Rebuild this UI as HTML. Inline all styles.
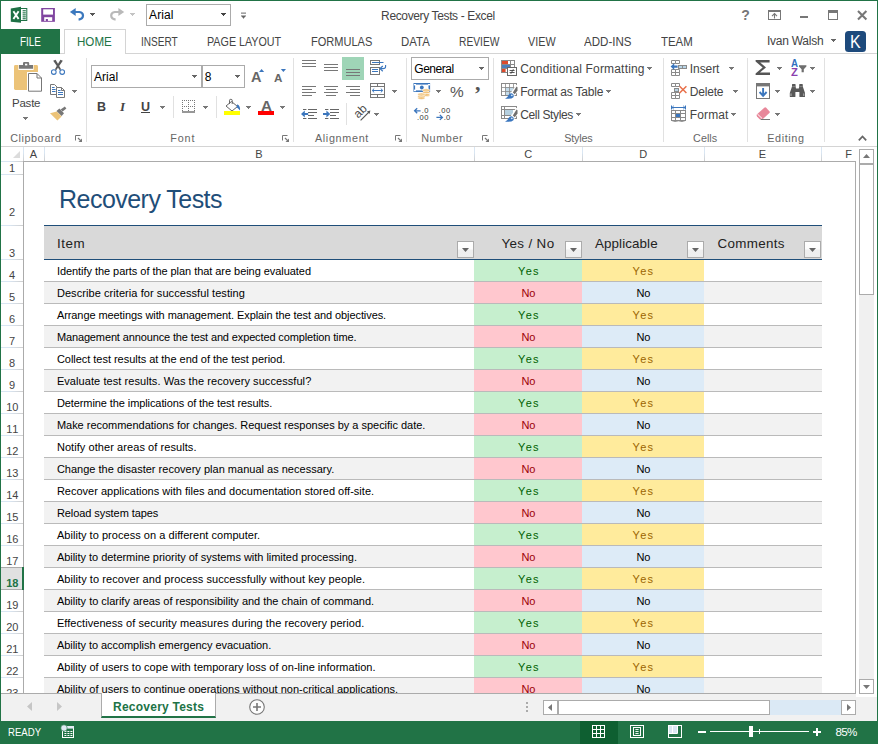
<!DOCTYPE html>
<html lang="en">
<head>
<meta charset="utf-8">
<title>Recovery Tests - Excel</title>
<style>

html,body{margin:0;padding:0;background:#fff;}
body{width:878px;height:744px;overflow:hidden;font-family:"Liberation Sans",Arial,sans-serif;}
#win{position:relative;width:878px;height:744px;overflow:hidden;background:#fff;}
#win div,#win span,#win svg{position:absolute;}
#win div{box-sizing:border-box;}
.t{white-space:pre;display:block;}
svg{overflow:visible;}

</style>
</head>
<body>
<div id="win">
<div style="left:1px;top:147px;width:855px;height:14px;background:#fff;"></div>
<div style="left:23px;top:161px;width:833px;height:1px;background:#ababab;"></div>
<div style="left:1px;top:161px;width:22px;height:1px;background:linear-gradient(90deg,#d9e6f3 0,#d9e6f3 35%,#cfcfcf 100%);"></div>
<div style="left:23px;top:147px;width:1px;height:14px;background:linear-gradient(180deg,#d9e6f3 0,#d9e6f3 40%,#cfcfcf 100%);"></div>
<div style="left:44px;top:147px;width:1px;height:14px;background:linear-gradient(180deg,#d9e6f3 0,#d9e6f3 40%,#cfcfcf 100%);"></div>
<div style="left:474px;top:147px;width:1px;height:14px;background:linear-gradient(180deg,#d9e6f3 0,#d9e6f3 40%,#cfcfcf 100%);"></div>
<div style="left:582px;top:147px;width:1px;height:14px;background:linear-gradient(180deg,#d9e6f3 0,#d9e6f3 40%,#cfcfcf 100%);"></div>
<div style="left:704px;top:147px;width:1px;height:14px;background:linear-gradient(180deg,#d9e6f3 0,#d9e6f3 40%,#cfcfcf 100%);"></div>
<div style="left:821px;top:147px;width:1px;height:14px;background:linear-gradient(180deg,#d9e6f3 0,#d9e6f3 40%,#cfcfcf 100%);"></div>
<span class="t" style="left:29.8px;top:149px;font-size:11px;line-height:11px;color:#444;">A</span>
<span class="t" style="left:255.3px;top:149px;font-size:11px;line-height:11px;color:#444;">B</span>
<span class="t" style="left:524.3px;top:149px;font-size:11px;line-height:11px;color:#444;">C</span>
<span class="t" style="left:639.3px;top:149px;font-size:11px;line-height:11px;color:#444;">D</span>
<span class="t" style="left:758.8px;top:149px;font-size:11px;line-height:11px;color:#444;">E</span>
<span class="t" style="left:845.3px;top:149px;font-size:11px;line-height:11px;color:#444;">F</span>
<svg style="left:13px;top:151px" width="7" height="7" viewBox="0 0 7 7"><path d="M7 0V7H0Z" fill="#dcdcdc"/></svg>
<div style="left:23px;top:162px;width:1px;height:532px;background:#ababab;"></div>
<div style="left:855px;top:161px;width:1px;height:533px;background:#ababab;"></div>
<div style="left:1px;top:174px;width:22px;height:1px;background:linear-gradient(90deg,#d9e6f3 0,#d9e6f3 35%,#cfcfcf 100%);"></div>
<span class="t" style="left:9.0px;top:163px;font-size:11px;line-height:11px;color:#444;">1</span>
<div style="left:1px;top:225px;width:22px;height:1px;background:linear-gradient(90deg,#d9e6f3 0,#d9e6f3 35%,#cfcfcf 100%);"></div>
<span class="t" style="left:9.0px;top:207px;font-size:11px;line-height:11px;color:#444;">2</span>
<div style="left:1px;top:259px;width:22px;height:1px;background:linear-gradient(90deg,#d9e6f3 0,#d9e6f3 35%,#cfcfcf 100%);"></div>
<span class="t" style="left:9.0px;top:248px;font-size:11px;line-height:11px;color:#444;">3</span>
<div style="left:1px;top:281px;width:22px;height:1px;background:linear-gradient(90deg,#d9e6f3 0,#d9e6f3 35%,#cfcfcf 100%);"></div>
<span class="t" style="left:9.0px;top:270px;font-size:11px;line-height:11px;color:#444;">4</span>
<div style="left:1px;top:303px;width:22px;height:1px;background:linear-gradient(90deg,#d9e6f3 0,#d9e6f3 35%,#cfcfcf 100%);"></div>
<span class="t" style="left:9.0px;top:292px;font-size:11px;line-height:11px;color:#444;">5</span>
<div style="left:1px;top:325px;width:22px;height:1px;background:linear-gradient(90deg,#d9e6f3 0,#d9e6f3 35%,#cfcfcf 100%);"></div>
<span class="t" style="left:9.0px;top:314px;font-size:11px;line-height:11px;color:#444;">6</span>
<div style="left:1px;top:347px;width:22px;height:1px;background:linear-gradient(90deg,#d9e6f3 0,#d9e6f3 35%,#cfcfcf 100%);"></div>
<span class="t" style="left:9.0px;top:336px;font-size:11px;line-height:11px;color:#444;">7</span>
<div style="left:1px;top:369px;width:22px;height:1px;background:linear-gradient(90deg,#d9e6f3 0,#d9e6f3 35%,#cfcfcf 100%);"></div>
<span class="t" style="left:9.0px;top:358px;font-size:11px;line-height:11px;color:#444;">8</span>
<div style="left:1px;top:391px;width:22px;height:1px;background:linear-gradient(90deg,#d9e6f3 0,#d9e6f3 35%,#cfcfcf 100%);"></div>
<span class="t" style="left:9.0px;top:380px;font-size:11px;line-height:11px;color:#444;">9</span>
<div style="left:1px;top:413px;width:22px;height:1px;background:linear-gradient(90deg,#d9e6f3 0,#d9e6f3 35%,#cfcfcf 100%);"></div>
<span class="t" style="left:6.2px;top:402px;font-size:11px;line-height:11px;color:#444;letter-spacing:-0.17px;">10</span>
<div style="left:1px;top:435px;width:22px;height:1px;background:linear-gradient(90deg,#d9e6f3 0,#d9e6f3 35%,#cfcfcf 100%);"></div>
<span class="t" style="left:6.2px;top:424px;font-size:11px;line-height:11px;color:#444;letter-spacing:0.66px;">11</span>
<div style="left:1px;top:457px;width:22px;height:1px;background:linear-gradient(90deg,#d9e6f3 0,#d9e6f3 35%,#cfcfcf 100%);"></div>
<span class="t" style="left:6.2px;top:446px;font-size:11px;line-height:11px;color:#444;letter-spacing:-0.17px;">12</span>
<div style="left:1px;top:479px;width:22px;height:1px;background:linear-gradient(90deg,#d9e6f3 0,#d9e6f3 35%,#cfcfcf 100%);"></div>
<span class="t" style="left:6.2px;top:468px;font-size:11px;line-height:11px;color:#444;letter-spacing:-0.17px;">13</span>
<div style="left:1px;top:501px;width:22px;height:1px;background:linear-gradient(90deg,#d9e6f3 0,#d9e6f3 35%,#cfcfcf 100%);"></div>
<span class="t" style="left:6.2px;top:490px;font-size:11px;line-height:11px;color:#444;letter-spacing:-0.17px;">14</span>
<div style="left:1px;top:523px;width:22px;height:1px;background:linear-gradient(90deg,#d9e6f3 0,#d9e6f3 35%,#cfcfcf 100%);"></div>
<span class="t" style="left:6.2px;top:512px;font-size:11px;line-height:11px;color:#444;letter-spacing:-0.17px;">15</span>
<div style="left:1px;top:545px;width:22px;height:1px;background:linear-gradient(90deg,#d9e6f3 0,#d9e6f3 35%,#cfcfcf 100%);"></div>
<span class="t" style="left:6.2px;top:534px;font-size:11px;line-height:11px;color:#444;letter-spacing:-0.17px;">16</span>
<div style="left:1px;top:567px;width:22px;height:1px;background:linear-gradient(90deg,#d9e6f3 0,#d9e6f3 35%,#cfcfcf 100%);"></div>
<span class="t" style="left:6.2px;top:556px;font-size:11px;line-height:11px;color:#444;letter-spacing:-0.17px;">17</span>
<div style="left:1px;top:589px;width:22px;height:1px;background:linear-gradient(90deg,#d9e6f3 0,#d9e6f3 35%,#cfcfcf 100%);"></div>
<div style="left:1px;top:567px;width:22px;height:23px;background:#e1e1e1;border-top:1px solid #ababab;border-bottom:1px solid #ababab;"></div>
<div style="left:22px;top:567px;width:2px;height:23px;background:#217346;"></div>
<span class="t" style="left:6.2px;top:578px;font-size:11px;line-height:11px;color:#217346;letter-spacing:-0.17px;font-weight:bold;">18</span>
<div style="left:1px;top:611px;width:22px;height:1px;background:linear-gradient(90deg,#d9e6f3 0,#d9e6f3 35%,#cfcfcf 100%);"></div>
<span class="t" style="left:6.2px;top:600px;font-size:11px;line-height:11px;color:#444;letter-spacing:-0.17px;">19</span>
<div style="left:1px;top:633px;width:22px;height:1px;background:linear-gradient(90deg,#d9e6f3 0,#d9e6f3 35%,#cfcfcf 100%);"></div>
<span class="t" style="left:6.2px;top:622px;font-size:11px;line-height:11px;color:#444;letter-spacing:-0.17px;">20</span>
<div style="left:1px;top:655px;width:22px;height:1px;background:linear-gradient(90deg,#d9e6f3 0,#d9e6f3 35%,#cfcfcf 100%);"></div>
<span class="t" style="left:6.2px;top:644px;font-size:11px;line-height:11px;color:#444;letter-spacing:-0.17px;">21</span>
<div style="left:1px;top:677px;width:22px;height:1px;background:linear-gradient(90deg,#d9e6f3 0,#d9e6f3 35%,#cfcfcf 100%);"></div>
<span class="t" style="left:6.2px;top:666px;font-size:11px;line-height:11px;color:#444;letter-spacing:-0.17px;">22</span>
<span class="t" style="left:6.2px;top:688px;font-size:11px;line-height:11px;color:#444;letter-spacing:-0.17px;">23</span>
<span class="t" style="left:59.1px;top:187px;font-size:25px;line-height:25px;color:#1f4e79;letter-spacing:-0.54px;">Recovery Tests</span>
<div style="left:44px;top:225px;width:778px;height:1px;background:#1f4e79;"></div>
<div style="left:44px;top:226px;width:778px;height:33px;background:#d9d9d9;"></div>
<div style="left:44px;top:259px;width:778px;height:1px;background:#1f4e79;"></div>
<span class="t" style="left:56.9px;top:237px;font-size:13.4px;line-height:13.4px;color:#222;letter-spacing:0.54px;">Item</span>
<span class="t" style="left:501.5px;top:237px;font-size:13.4px;line-height:13.4px;color:#222;letter-spacing:0.35px;">Yes / No</span>
<span class="t" style="left:595.0px;top:237px;font-size:13.4px;line-height:13.4px;color:#222;letter-spacing:0.09px;">Applicable</span>
<span class="t" style="left:717.5px;top:237px;font-size:13.4px;line-height:13.4px;color:#222;letter-spacing:0.33px;">Comments</span>
<div style="left:457px;top:241px;width:17px;height:17px;border:1px solid #ababab;background:linear-gradient(180deg,#ffffff 0,#fcfcfc 48%,#efefef 52%,#eeeeee 100%);"></div>
<svg style="left:462px;top:248px" width="7" height="4" viewBox="0 0 7 4"><path d="M0 0H7L3.5 4Z" fill="#666"/></svg>
<div style="left:565px;top:241px;width:17px;height:17px;border:1px solid #ababab;background:linear-gradient(180deg,#ffffff 0,#fcfcfc 48%,#efefef 52%,#eeeeee 100%);"></div>
<svg style="left:570px;top:248px" width="7" height="4" viewBox="0 0 7 4"><path d="M0 0H7L3.5 4Z" fill="#666"/></svg>
<div style="left:687px;top:241px;width:17px;height:17px;border:1px solid #ababab;background:linear-gradient(180deg,#ffffff 0,#fcfcfc 48%,#efefef 52%,#eeeeee 100%);"></div>
<svg style="left:692px;top:248px" width="7" height="4" viewBox="0 0 7 4"><path d="M0 0H7L3.5 4Z" fill="#666"/></svg>
<div style="left:804px;top:241px;width:17px;height:17px;border:1px solid #ababab;background:linear-gradient(180deg,#ffffff 0,#fcfcfc 48%,#efefef 52%,#eeeeee 100%);"></div>
<svg style="left:809px;top:248px" width="7" height="4" viewBox="0 0 7 4"><path d="M0 0H7L3.5 4Z" fill="#666"/></svg>
<div style="left:474px;top:260px;width:108px;height:21px;background:#c6efce;"></div>
<div style="left:582px;top:260px;width:122px;height:21px;background:#ffeb9c;"></div>
<div style="left:44px;top:281px;width:778px;height:1px;background:#bababa;"></div>
<span class="t" style="left:56.9px;top:266px;font-size:11px;line-height:11px;color:#000;letter-spacing:-0.05px;">Identify the parts of the plan that are being evaluated</span>
<span class="t" style="left:518.1px;top:266px;font-size:11px;line-height:11px;color:#006100;letter-spacing:1.21px;">Yes</span>
<span class="t" style="left:632.6px;top:266px;font-size:11px;line-height:11px;color:#9c6500;letter-spacing:1.21px;">Yes</span>
<div style="left:44px;top:282px;width:778px;height:21px;background:#f2f2f2;"></div>
<div style="left:474px;top:282px;width:108px;height:21px;background:#ffc7ce;"></div>
<div style="left:582px;top:282px;width:122px;height:21px;background:#ddebf7;"></div>
<div style="left:44px;top:303px;width:778px;height:1px;background:#bababa;"></div>
<span class="t" style="left:56.9px;top:288px;font-size:11px;line-height:11px;color:#000;letter-spacing:0.07px;">Describe criteria for successful testing</span>
<span class="t" style="left:521.6px;top:288px;font-size:11px;line-height:11px;color:#9c0006;letter-spacing:-0.18px;">No</span>
<span class="t" style="left:636.6px;top:288px;font-size:11px;line-height:11px;color:#000;letter-spacing:-0.18px;">No</span>
<div style="left:474px;top:304px;width:108px;height:21px;background:#c6efce;"></div>
<div style="left:582px;top:304px;width:122px;height:21px;background:#ffeb9c;"></div>
<div style="left:44px;top:325px;width:778px;height:1px;background:#bababa;"></div>
<span class="t" style="left:56.9px;top:310px;font-size:11px;line-height:11px;color:#000;letter-spacing:-0.08px;">Arrange meetings with management. Explain the test and objectives.</span>
<span class="t" style="left:518.1px;top:310px;font-size:11px;line-height:11px;color:#006100;letter-spacing:1.21px;">Yes</span>
<span class="t" style="left:632.6px;top:310px;font-size:11px;line-height:11px;color:#9c6500;letter-spacing:1.21px;">Yes</span>
<div style="left:44px;top:326px;width:778px;height:21px;background:#f2f2f2;"></div>
<div style="left:474px;top:326px;width:108px;height:21px;background:#ffc7ce;"></div>
<div style="left:582px;top:326px;width:122px;height:21px;background:#ddebf7;"></div>
<div style="left:44px;top:347px;width:778px;height:1px;background:#bababa;"></div>
<span class="t" style="left:56.9px;top:332px;font-size:11px;line-height:11px;color:#000;letter-spacing:-0.13px;">Management announce the test and expected completion time.</span>
<span class="t" style="left:521.6px;top:332px;font-size:11px;line-height:11px;color:#9c0006;letter-spacing:-0.18px;">No</span>
<span class="t" style="left:636.6px;top:332px;font-size:11px;line-height:11px;color:#000;letter-spacing:-0.18px;">No</span>
<div style="left:474px;top:348px;width:108px;height:21px;background:#c6efce;"></div>
<div style="left:582px;top:348px;width:122px;height:21px;background:#ffeb9c;"></div>
<div style="left:44px;top:369px;width:778px;height:1px;background:#bababa;"></div>
<span class="t" style="left:56.9px;top:354px;font-size:11px;line-height:11px;color:#000;letter-spacing:-0.03px;">Collect test results at the end of the test period.</span>
<span class="t" style="left:518.1px;top:354px;font-size:11px;line-height:11px;color:#006100;letter-spacing:1.21px;">Yes</span>
<span class="t" style="left:632.6px;top:354px;font-size:11px;line-height:11px;color:#9c6500;letter-spacing:1.21px;">Yes</span>
<div style="left:44px;top:370px;width:778px;height:21px;background:#f2f2f2;"></div>
<div style="left:474px;top:370px;width:108px;height:21px;background:#ffc7ce;"></div>
<div style="left:582px;top:370px;width:122px;height:21px;background:#ddebf7;"></div>
<div style="left:44px;top:391px;width:778px;height:1px;background:#bababa;"></div>
<span class="t" style="left:56.9px;top:376px;font-size:11px;line-height:11px;color:#000;letter-spacing:0.07px;">Evaluate test results. Was the recovery successful?</span>
<span class="t" style="left:521.6px;top:376px;font-size:11px;line-height:11px;color:#9c0006;letter-spacing:-0.18px;">No</span>
<span class="t" style="left:636.6px;top:376px;font-size:11px;line-height:11px;color:#000;letter-spacing:-0.18px;">No</span>
<div style="left:474px;top:392px;width:108px;height:21px;background:#c6efce;"></div>
<div style="left:582px;top:392px;width:122px;height:21px;background:#ffeb9c;"></div>
<div style="left:44px;top:413px;width:778px;height:1px;background:#bababa;"></div>
<span class="t" style="left:56.9px;top:398px;font-size:11px;line-height:11px;color:#000;letter-spacing:-0.09px;">Determine the implications of the test results.</span>
<span class="t" style="left:518.1px;top:398px;font-size:11px;line-height:11px;color:#006100;letter-spacing:1.21px;">Yes</span>
<span class="t" style="left:632.6px;top:398px;font-size:11px;line-height:11px;color:#9c6500;letter-spacing:1.21px;">Yes</span>
<div style="left:44px;top:414px;width:778px;height:21px;background:#f2f2f2;"></div>
<div style="left:474px;top:414px;width:108px;height:21px;background:#ffc7ce;"></div>
<div style="left:582px;top:414px;width:122px;height:21px;background:#ddebf7;"></div>
<div style="left:44px;top:435px;width:778px;height:1px;background:#bababa;"></div>
<span class="t" style="left:56.9px;top:420px;font-size:11px;line-height:11px;color:#000;letter-spacing:-0.02px;">Make recommendations for changes. Request responses by a specific date.</span>
<span class="t" style="left:521.6px;top:420px;font-size:11px;line-height:11px;color:#9c0006;letter-spacing:-0.18px;">No</span>
<span class="t" style="left:636.6px;top:420px;font-size:11px;line-height:11px;color:#000;letter-spacing:-0.18px;">No</span>
<div style="left:474px;top:436px;width:108px;height:21px;background:#c6efce;"></div>
<div style="left:582px;top:436px;width:122px;height:21px;background:#ffeb9c;"></div>
<div style="left:44px;top:457px;width:778px;height:1px;background:#bababa;"></div>
<span class="t" style="left:56.9px;top:442px;font-size:11px;line-height:11px;color:#000;letter-spacing:0.07px;">Notify other areas of results.</span>
<span class="t" style="left:518.1px;top:442px;font-size:11px;line-height:11px;color:#006100;letter-spacing:1.21px;">Yes</span>
<span class="t" style="left:632.6px;top:442px;font-size:11px;line-height:11px;color:#9c6500;letter-spacing:1.21px;">Yes</span>
<div style="left:44px;top:458px;width:778px;height:21px;background:#f2f2f2;"></div>
<div style="left:474px;top:458px;width:108px;height:21px;background:#ffc7ce;"></div>
<div style="left:582px;top:458px;width:122px;height:21px;background:#ddebf7;"></div>
<div style="left:44px;top:479px;width:778px;height:1px;background:#bababa;"></div>
<span class="t" style="left:56.9px;top:464px;font-size:11px;line-height:11px;color:#000;letter-spacing:0.01px;">Change the disaster recovery plan manual as necessary.</span>
<span class="t" style="left:521.6px;top:464px;font-size:11px;line-height:11px;color:#9c0006;letter-spacing:-0.18px;">No</span>
<span class="t" style="left:636.6px;top:464px;font-size:11px;line-height:11px;color:#000;letter-spacing:-0.18px;">No</span>
<div style="left:474px;top:480px;width:108px;height:21px;background:#c6efce;"></div>
<div style="left:582px;top:480px;width:122px;height:21px;background:#ffeb9c;"></div>
<div style="left:44px;top:501px;width:778px;height:1px;background:#bababa;"></div>
<span class="t" style="left:56.9px;top:486px;font-size:11px;line-height:11px;color:#000;letter-spacing:0.01px;">Recover applications with files and documentation stored off-site.</span>
<span class="t" style="left:518.1px;top:486px;font-size:11px;line-height:11px;color:#006100;letter-spacing:1.21px;">Yes</span>
<span class="t" style="left:632.6px;top:486px;font-size:11px;line-height:11px;color:#9c6500;letter-spacing:1.21px;">Yes</span>
<div style="left:44px;top:502px;width:778px;height:21px;background:#f2f2f2;"></div>
<div style="left:474px;top:502px;width:108px;height:21px;background:#ffc7ce;"></div>
<div style="left:582px;top:502px;width:122px;height:21px;background:#ddebf7;"></div>
<div style="left:44px;top:523px;width:778px;height:1px;background:#bababa;"></div>
<span class="t" style="left:56.9px;top:508px;font-size:11px;line-height:11px;color:#000;letter-spacing:-0.07px;">Reload system tapes</span>
<span class="t" style="left:521.6px;top:508px;font-size:11px;line-height:11px;color:#9c0006;letter-spacing:-0.18px;">No</span>
<span class="t" style="left:636.6px;top:508px;font-size:11px;line-height:11px;color:#000;letter-spacing:-0.18px;">No</span>
<div style="left:474px;top:524px;width:108px;height:21px;background:#c6efce;"></div>
<div style="left:582px;top:524px;width:122px;height:21px;background:#ffeb9c;"></div>
<div style="left:44px;top:545px;width:778px;height:1px;background:#bababa;"></div>
<span class="t" style="left:56.9px;top:530px;font-size:11px;line-height:11px;color:#000;letter-spacing:0.04px;">Ability to process on a different computer.</span>
<span class="t" style="left:518.1px;top:530px;font-size:11px;line-height:11px;color:#006100;letter-spacing:1.21px;">Yes</span>
<span class="t" style="left:632.6px;top:530px;font-size:11px;line-height:11px;color:#9c6500;letter-spacing:1.21px;">Yes</span>
<div style="left:44px;top:546px;width:778px;height:21px;background:#f2f2f2;"></div>
<div style="left:474px;top:546px;width:108px;height:21px;background:#ffc7ce;"></div>
<div style="left:582px;top:546px;width:122px;height:21px;background:#ddebf7;"></div>
<div style="left:44px;top:567px;width:778px;height:1px;background:#bababa;"></div>
<span class="t" style="left:56.9px;top:552px;font-size:11px;line-height:11px;color:#000;letter-spacing:-0.03px;">Ability to determine priority of systems with limited processing.</span>
<span class="t" style="left:521.6px;top:552px;font-size:11px;line-height:11px;color:#9c0006;letter-spacing:-0.18px;">No</span>
<span class="t" style="left:636.6px;top:552px;font-size:11px;line-height:11px;color:#000;letter-spacing:-0.18px;">No</span>
<div style="left:474px;top:568px;width:108px;height:21px;background:#c6efce;"></div>
<div style="left:582px;top:568px;width:122px;height:21px;background:#ffeb9c;"></div>
<div style="left:44px;top:589px;width:778px;height:1px;background:#bababa;"></div>
<span class="t" style="left:56.9px;top:574px;font-size:11px;line-height:11px;color:#000;letter-spacing:0.07px;">Ability to recover and process successfully without key people.</span>
<span class="t" style="left:518.1px;top:574px;font-size:11px;line-height:11px;color:#006100;letter-spacing:1.21px;">Yes</span>
<span class="t" style="left:632.6px;top:574px;font-size:11px;line-height:11px;color:#9c6500;letter-spacing:1.21px;">Yes</span>
<div style="left:44px;top:590px;width:778px;height:21px;background:#f2f2f2;"></div>
<div style="left:474px;top:590px;width:108px;height:21px;background:#ffc7ce;"></div>
<div style="left:582px;top:590px;width:122px;height:21px;background:#ddebf7;"></div>
<div style="left:44px;top:611px;width:778px;height:1px;background:#bababa;"></div>
<span class="t" style="left:56.9px;top:596px;font-size:11px;line-height:11px;color:#000;letter-spacing:-0.02px;">Ability to clarify areas of responsibility and the chain of command.</span>
<span class="t" style="left:521.6px;top:596px;font-size:11px;line-height:11px;color:#9c0006;letter-spacing:-0.18px;">No</span>
<span class="t" style="left:636.6px;top:596px;font-size:11px;line-height:11px;color:#000;letter-spacing:-0.18px;">No</span>
<div style="left:474px;top:612px;width:108px;height:21px;background:#c6efce;"></div>
<div style="left:582px;top:612px;width:122px;height:21px;background:#ffeb9c;"></div>
<div style="left:44px;top:633px;width:778px;height:1px;background:#bababa;"></div>
<span class="t" style="left:56.9px;top:618px;font-size:11px;line-height:11px;color:#000;letter-spacing:0.06px;">Effectiveness of security measures during the recovery period.</span>
<span class="t" style="left:518.1px;top:618px;font-size:11px;line-height:11px;color:#006100;letter-spacing:1.21px;">Yes</span>
<span class="t" style="left:632.6px;top:618px;font-size:11px;line-height:11px;color:#9c6500;letter-spacing:1.21px;">Yes</span>
<div style="left:44px;top:634px;width:778px;height:21px;background:#f2f2f2;"></div>
<div style="left:474px;top:634px;width:108px;height:21px;background:#ffc7ce;"></div>
<div style="left:582px;top:634px;width:122px;height:21px;background:#ddebf7;"></div>
<div style="left:44px;top:655px;width:778px;height:1px;background:#bababa;"></div>
<span class="t" style="left:56.9px;top:640px;font-size:11px;line-height:11px;color:#000;letter-spacing:-0.05px;">Ability to accomplish emergency evacuation.</span>
<span class="t" style="left:521.6px;top:640px;font-size:11px;line-height:11px;color:#9c0006;letter-spacing:-0.18px;">No</span>
<span class="t" style="left:636.6px;top:640px;font-size:11px;line-height:11px;color:#000;letter-spacing:-0.18px;">No</span>
<div style="left:474px;top:656px;width:108px;height:21px;background:#c6efce;"></div>
<div style="left:582px;top:656px;width:122px;height:21px;background:#ffeb9c;"></div>
<div style="left:44px;top:677px;width:778px;height:1px;background:#bababa;"></div>
<span class="t" style="left:56.9px;top:662px;font-size:11px;line-height:11px;color:#000;letter-spacing:0.02px;">Ability of users to cope with temporary loss of on-line information.</span>
<span class="t" style="left:518.1px;top:662px;font-size:11px;line-height:11px;color:#006100;letter-spacing:1.21px;">Yes</span>
<span class="t" style="left:632.6px;top:662px;font-size:11px;line-height:11px;color:#9c6500;letter-spacing:1.21px;">Yes</span>
<div style="left:44px;top:678px;width:778px;height:21px;background:#f2f2f2;"></div>
<div style="left:474px;top:678px;width:108px;height:21px;background:#ffc7ce;"></div>
<div style="left:582px;top:678px;width:122px;height:21px;background:#ddebf7;"></div>
<div style="left:44px;top:699px;width:778px;height:1px;background:#bababa;"></div>
<span class="t" style="left:56.9px;top:684px;font-size:11px;line-height:11px;color:#000;">Ability of users to continue operations without non-critical applications.</span>
<span class="t" style="left:521.6px;top:684px;font-size:11px;line-height:11px;color:#9c0006;letter-spacing:-0.18px;">No</span>
<span class="t" style="left:636.6px;top:684px;font-size:11px;line-height:11px;color:#000;letter-spacing:-0.18px;">No</span>
<div style="left:1px;top:694px;width:876px;height:27px;background:#f1f1f1;"></div>
<div style="left:1px;top:693px;width:855px;height:1px;background:#ababab;"></div>
<div style="left:101px;top:693px;width:115px;height:25px;background:#fff;border-left:1px solid #ababab;border-right:1px solid #ababab;border-bottom:2px solid #217346;"></div>
<span class="t" style="left:113.0px;top:701px;font-size:12px;line-height:12px;color:#217346;letter-spacing:0.24px;font-weight:bold;">Recovery Tests</span>
<svg style="left:27px;top:702px" width="5" height="9" viewBox="0 0 5 9"><path d="M5 0V9L0 4.5Z" fill="#c6c6c6"/></svg>
<svg style="left:57px;top:702px" width="5" height="9" viewBox="0 0 5 9"><path d="M0 0V9L5 4.5Z" fill="#c6c6c6"/></svg>
<svg style="left:249px;top:699px" width="16" height="16" viewBox="0 0 16 16"><circle cx="8" cy="8" r="7.3" fill="#fdfdfd" stroke="#777" stroke-width="1.1"/><path d="M4 8H12M8 4V12" stroke="#777" stroke-width="1.6"/></svg>
<div style="left:526px;top:702px;width:2px;height:2px;background:#ababab;"></div>
<div style="left:526px;top:706px;width:2px;height:2px;background:#ababab;"></div>
<div style="left:526px;top:710px;width:2px;height:2px;background:#ababab;"></div>
<div style="left:543px;top:700px;width:15px;height:15px;background:#fff;border:1px solid #ababab;"></div>
<svg style="left:548px;top:704px" width="4" height="7" viewBox="0 0 4 7"><path d="M4 0V7L0 3.5Z" fill="#777"/></svg>
<div style="left:558px;top:700px;width:212px;height:15px;background:#fff;border:1px solid #ababab;"></div>
<div style="left:770px;top:700px;width:71px;height:15px;background:#dbe9f5;"></div>
<div style="left:841px;top:700px;width:15px;height:15px;background:#fff;border:1px solid #ababab;"></div>
<svg style="left:847px;top:704px" width="4" height="7" viewBox="0 0 4 7"><path d="M0 0V7L4 3.5Z" fill="#777"/></svg>
<div style="left:856px;top:147px;width:21px;height:550px;background:#fff;"></div>
<div style="left:859px;top:164px;width:15px;height:516px;background:#f0f0f0;"></div>
<div style="left:859px;top:149px;width:15px;height:15px;background:#fff;border:1px solid #ababab;"></div>
<svg style="left:863px;top:154px" width="7" height="4" viewBox="0 0 7 4"><path d="M0 4H7L3.5 0Z" fill="#777"/></svg>
<div style="left:859px;top:164px;width:15px;height:131px;background:#fff;border:1px solid #ababab;"></div>
<div style="left:859px;top:679px;width:15px;height:15px;background:#fff;border:1px solid #ababab;"></div>
<svg style="left:863px;top:685px" width="7" height="4" viewBox="0 0 7 4"><path d="M0 0H7L3.5 4Z" fill="#777"/></svg>
<div style="left:0px;top:721px;width:878px;height:23px;background:#217346;"></div>
<span class="t" style="left:8.3px;top:726px;font-size:11.6px;line-height:11.6px;color:#fff;transform:scaleX(0.829);transform-origin:0 0;">READY</span>
<div style="left:580px;top:721px;width:38px;height:23px;background:#0e5f31;"></div>
<span class="t" style="left:835.5px;top:726px;font-size:11.6px;line-height:11.6px;color:#fff;letter-spacing:-0.7px;">85%</span>
<svg style="left:0;top:721px" width="878" height="23" viewBox="0 721 878 23">
<rect x="62.5" y="726.5" width="11" height="11" fill="none" stroke="#fff" stroke-width="1"/>
<rect x="63" y="726" width="11" height="2.6" fill="#e3ecf5"/>
<rect x="64.4" y="731" width="2" height="1" fill="#fff"/>
<rect x="67.4" y="731" width="2" height="1" fill="#fff"/>
<rect x="70.4" y="731" width="2" height="1" fill="#fff"/>
<rect x="64.4" y="733" width="2" height="1" fill="#fff"/>
<rect x="67.4" y="733" width="2" height="1" fill="#fff"/>
<rect x="70.4" y="733" width="2" height="1" fill="#fff"/>
<rect x="64.4" y="735" width="2" height="1" fill="#fff"/>
<rect x="67.4" y="735" width="2" height="1" fill="#fff"/>
<rect x="70.4" y="735" width="2" height="1" fill="#fff"/>
<circle cx="64" cy="728" r="3.2" fill="#dfe9f3" stroke="#217346" stroke-width=".6"/>
<rect x="592.5" y="725.5" width="12" height="12" fill="none" stroke="#fff"/>
<path d="M596.5 725.5V737.5M600.5 725.5V737.5M592.5 729.5H604.5M592.5 733.5H604.5" stroke="#fff" fill="none"/>
<rect x="630.5" y="725.5" width="13" height="12" fill="none" stroke="#fff"/>
<rect x="633.5" y="727.5" width="7" height="8" fill="none" stroke="#fff"/>
<path d="M635.4 729.5H638.6M635.4 731.5H638.6M635.4 733.5H638.6" stroke="#fff" stroke-width=".9"/>
<rect x="668.5" y="725.5" width="13" height="12" fill="none" stroke="#fff"/>
<rect x="669" y="726" width="8" height="7" fill="#dbe7f3"/>
<path d="M672.5 726V733M677.5 726V733.5H669" stroke="#fff" fill="none"/>
<rect x="710" y="731" width="99" height="1" fill="#fff"/>
<rect x="749" y="726" width="4" height="11" fill="#fff"/>
<rect x="759" y="729" width="1" height="5" fill="#fff"/>
<rect x="698" y="731" width="8" height="2" fill="#fff"/>
<rect x="813" y="731" width="8" height="2" fill="#fff"/>
<rect x="816" y="728" width="2" height="8" fill="#fff"/>
</svg>
<div style="left:1px;top:1px;width:876px;height:146px;background:#fff;"></div>
<div style="left:0px;top:0px;width:878px;height:1px;background:#217346;"></div>
<div style="left:0px;top:0px;width:1px;height:744px;background:#217346;"></div>
<div style="left:877px;top:0px;width:1px;height:744px;background:#217346;"></div>
<span class="t" style="left:381.1px;top:10px;font-size:12px;line-height:12px;color:#444;letter-spacing:-0.37px;">Recovery Tests - Excel</span>
<div style="left:146px;top:4px;width:85px;height:22px;background:#fff;border:1px solid #ababab;"></div>
<span class="t" style="left:149.1px;top:9px;font-size:12px;line-height:12px;color:#000;letter-spacing:0.06px;">Arial</span>
<div style="left:1px;top:29px;width:59px;height:25px;background:#217346;"></div>
<span class="t" style="left:20.2px;top:36px;font-size:12.2px;line-height:12.2px;color:#fff;transform:scaleX(0.815);transform-origin:0 0;">FILE</span>
<div style="left:60px;top:53px;width:817px;height:1px;background:#d4d4d4;"></div>
<div style="left:64px;top:29px;width:62px;height:25px;background:#fff;border:1px solid #d4d4d4;border-bottom:none;"></div>
<span class="t" style="left:77.2px;top:36px;font-size:12.2px;line-height:12.2px;color:#217346;transform:scaleX(0.951);transform-origin:0 0;">HOME</span>
<span class="t" style="left:141.1px;top:36px;font-size:12.2px;line-height:12.2px;color:#444;transform:scaleX(0.827);transform-origin:0 0;">INSERT</span>
<span class="t" style="left:207.2px;top:36px;font-size:12.2px;line-height:12.2px;color:#444;transform:scaleX(0.881);transform-origin:0 0;">PAGE LAYOUT</span>
<span class="t" style="left:311.0px;top:36px;font-size:12.2px;line-height:12.2px;color:#444;transform:scaleX(0.906);transform-origin:0 0;">FORMULAS</span>
<span class="t" style="left:401.2px;top:36px;font-size:12.2px;line-height:12.2px;color:#444;transform:scaleX(0.937);transform-origin:0 0;">DATA</span>
<span class="t" style="left:459.0px;top:36px;font-size:12.2px;line-height:12.2px;color:#444;transform:scaleX(0.840);transform-origin:0 0;">REVIEW</span>
<span class="t" style="left:527.7px;top:36px;font-size:12.2px;line-height:12.2px;color:#444;transform:scaleX(0.885);transform-origin:0 0;">VIEW</span>
<span class="t" style="left:583.9px;top:36px;font-size:12.2px;line-height:12.2px;color:#444;transform:scaleX(0.949);transform-origin:0 0;">ADD-INS</span>
<span class="t" style="left:660.5px;top:36px;font-size:12.2px;line-height:12.2px;color:#444;transform:scaleX(0.938);transform-origin:0 0;">TEAM</span>
<span class="t" style="left:766.9px;top:35px;font-size:12px;line-height:12px;color:#444;letter-spacing:-0.24px;">Ivan Walsh</span>
<div style="left:844.5px;top:30.8px;width:21.6px;height:21.4px;background:#1d4a7c;border-radius:3.5px;"></div>
<span class="t" style="left:850.1px;top:33px;font-size:18.5px;line-height:18.5px;color:#fff;transform:scaleX(0.865);transform-origin:0 0;">K</span>
<div style="left:1px;top:146px;width:876px;height:1px;background:#d4d4d4;"></div>
<svg style="left:0;top:0" width="878" height="147" viewBox="0 0 878 147">
<rect x="86" y="58" width="1" height="84" fill="#e1e1e1"/>
<rect x="293" y="58" width="1" height="84" fill="#e1e1e1"/>
<rect x="406" y="58" width="1" height="84" fill="#e1e1e1"/>
<rect x="493" y="58" width="1" height="84" fill="#e1e1e1"/>
<rect x="663" y="58" width="1" height="84" fill="#e1e1e1"/>
<rect x="747" y="58" width="1" height="84" fill="#e1e1e1"/>
<rect x="824" y="58" width="1" height="84" fill="#e1e1e1"/>
<rect x="14" y="65" width="24" height="25" rx="1.4" fill="#ecc378"/>
<rect x="18.4" y="64.6" width="15.2" height="5.4" fill="#fff"/>
<path d="M19 68.8V65H23V63.2Q23 62 24.2 62H28Q29.2 62 29.2 63.2V65H33V68.8Z" fill="#777"/>
<rect x="25" y="63.7" width="2.3" height="1.7" fill="#fff"/>
<rect x="27" y="72" width="12" height="19" fill="#fff"/>
<path d="M28.5 73.5H37L41.5 78V91.2H28.5Z" fill="#fff" stroke="#777" stroke-width="1"/>
<path d="M37 73.5V78H41.5" fill="none" stroke="#777" stroke-width="1"/>
<path d="M23 117h5v1h-5zM24 118h3v1h-3zM25 119h1v1h-1z" fill="#777"/>
<path d="M53.2 60.7L55.6 59.8L61.1 69.2L59.8 70.3Z" fill="#5a5a5a"/>
<path d="M62.8 60.7L60.4 59.8L54.9 69.2L56.2 70.3Z" fill="#5a5a5a"/>
<circle cx="53.8" cy="72" r="2.35" fill="#fff" stroke="#3b76bd" stroke-width="1.05"/>
<circle cx="62.2" cy="72" r="2.35" fill="#fff" stroke="#3b76bd" stroke-width="1.05"/>
<path d="M50.5 84.5H54.5L57.5 87.5V94.5H50.5Z" fill="#fff" stroke="#777"/>
<path d="M52 87.5h2.6M52 89.5h3.6M52 91.5h3.6" stroke="#3b76bd" stroke-width="1"/>
<path d="M56.5 87.5H61.5L64.5 90.5V97.5H56.5Z" fill="#fff" stroke="#777"/>
<path d="M61.5 87.5V90.5H64.5" fill="none" stroke="#777"/>
<path d="M58 90.5h2.6M58 92.5h5M58 94.5h5" stroke="#3b76bd" stroke-width="1"/>
<path d="M72 90h5v1h-5zM73 91h3v1h-3zM74 92h1v1h-1z" fill="#777"/>
<path d="M50 113.3L56.8 111.6L61.6 116.4L57.4 120.5Z" fill="#ecc378"/>
<path d="M56.5 111L59.4 108.5L64 113.3L61.6 116Z" fill="#777"/>
<path d="M60.6 109.4L64.8 106.4L66.4 108.4L62.6 111.6Z" fill="#777"/>
<path d="M75 140V135H80" fill="none" stroke="#777" stroke-width="1" transform="translate(.5 .5)"/><path d="M78 138L81.2 141.2" stroke="#777" stroke-width="1.2"/><path d="M82 138.5V142H78.5Z" fill="#777"/>
<rect x="91.5" y="65.5" width="110" height="22" fill="#fff" stroke="#ababab"/>
<rect x="202.5" y="65.5" width="42" height="22" fill="#fff" stroke="#ababab"/>
<path d="M192 75h5v1h-5zM193 76h3v1h-3zM194 77h1v1h-1z" fill="#666"/>
<path d="M235 75h5v1h-5zM236 76h3v1h-3zM237 77h1v1h-1z" fill="#666"/>
<path d="M259 72L261.6 69L264.2 72Z" fill="#3b76bd"/>
<path d="M280.8 69H286L283.4 72Z" fill="#3b76bd"/>
<path d="M160 106h5v1h-5zM161 107h3v1h-3zM162 108h1v1h-1z" fill="#777"/>
<rect x="173" y="96" width="1" height="22" fill="#e1e1e1"/>
<rect x="216" y="96" width="1" height="22" fill="#e1e1e1"/>
<path d="M182 100h1v1h-1zM184 100h1v1h-1zM186 100h1v1h-1zM188 100h1v1h-1zM190 100h1v1h-1zM192 100h1v1h-1zM194 100h1v1h-1zM182 106h1v1h-1zM184 106h1v1h-1zM186 106h1v1h-1zM188 106h1v1h-1zM190 106h1v1h-1zM192 106h1v1h-1zM194 106h1v1h-1zM182 102h1v1h-1zM182 104h1v1h-1zM182 108h1v1h-1zM182 110h1v1h-1zM188 102h1v1h-1zM188 104h1v1h-1zM188 108h1v1h-1zM188 110h1v1h-1zM194 102h1v1h-1zM194 104h1v1h-1zM194 108h1v1h-1zM194 110h1v1h-1z" fill="#777"/>
<rect x="182" y="111.4" width="13" height="1.2" fill="#555"/>
<path d="M203 106h5v1h-5zM204 107h3v1h-3zM205 108h1v1h-1z" fill="#777"/>
<path d="M231.5 101.5L237.5 106.5L232 111L226 106Z" fill="#fff" stroke="#666" stroke-width="1"/>
<path d="M229.5 104V100.3Q229.5 99.3 230.8 99.3Q232.2 99.3 232.2 100.3V104" fill="none" stroke="#666" stroke-width="1"/>
<path d="M237.3 104.2Q240.6 105.8 240 110.6Q238 108 236.6 107.3Z" fill="#3b76bd"/>
<rect x="224" y="111" width="16" height="4" fill="#ffff00"/>
<path d="M246 106h5v1h-5zM247 107h3v1h-3zM248 108h1v1h-1z" fill="#777"/>
<rect x="258" y="111" width="16" height="4" fill="#ff0000"/>
<path d="M280 106h5v1h-5zM281 107h3v1h-3zM282 108h1v1h-1z" fill="#777"/>
<path d="M282 140V135H287" fill="none" stroke="#777" stroke-width="1" transform="translate(.5 .5)"/><path d="M285 138L288.2 141.2" stroke="#777" stroke-width="1.2"/><path d="M289 138.5V142H285.5Z" fill="#777"/>
<rect x="302" y="60" width="14" height="1" fill="#777"/>
<rect x="302" y="63" width="14" height="1" fill="#777"/>
<rect x="302" y="66" width="14" height="1" fill="#777"/>
<rect x="324" y="64" width="14" height="1" fill="#777"/>
<rect x="324" y="67" width="14" height="1" fill="#777"/>
<rect x="324" y="70" width="14" height="1" fill="#777"/>
<rect x="342" y="57" width="22" height="23" fill="#9fd5b7"/>
<rect x="346" y="69" width="14" height="1" fill="#777"/>
<rect x="346" y="72" width="14" height="1" fill="#777"/>
<rect x="346" y="75" width="14" height="1" fill="#777"/>
<rect x="302" y="86" width="14" height="1" fill="#777"/>
<rect x="302" y="89" width="10" height="1" fill="#777"/>
<rect x="302" y="92" width="14" height="1" fill="#777"/>
<rect x="302" y="95" width="10" height="1" fill="#777"/>
<rect x="324.0" y="86" width="14.0" height="1" fill="#777"/>
<rect x="326.0" y="89" width="10.0" height="1" fill="#777"/>
<rect x="324.0" y="92" width="14.0" height="1" fill="#777"/>
<rect x="326.0" y="95" width="10.0" height="1" fill="#777"/>
<rect x="346" y="86" width="14" height="1" fill="#777"/>
<rect x="350" y="89" width="10" height="1" fill="#777"/>
<rect x="346" y="92" width="14" height="1" fill="#777"/>
<rect x="350" y="95" width="10" height="1" fill="#777"/>
<rect x="370.5" y="60.5" width="9" height="4" fill="#fff" stroke="#777"/>
<rect x="370.5" y="67.5" width="9" height="7" fill="#fff" stroke="#777"/>
<path d="M372 62.5H383.5" stroke="#3b76bd"/>
<path d="M372 69.5H378M372 71.5H378" stroke="#3b76bd"/>
<path d="M385.6 65V66.4Q385.6 68.6 383 68.6H380.4" fill="none" stroke="#3b76bd" stroke-width="1.1"/>
<path d="M382.8 66L380 68.6L382.8 71.2" fill="none" stroke="#3b76bd" stroke-width="1.2"/>
<rect x="370.5" y="83.5" width="14" height="14" fill="#fff" stroke="#777"/>
<path d="M370.5 86.5H384.5M370.5 94.5H384.5M377.5 83.5V86.5M377.5 94.5V97.5" stroke="#777"/>
<path d="M372.5 90.5H382.5" stroke="#3b76bd"/>
<path d="M374.2 88.6L372.2 90.5L374.2 92.4M380.8 88.6L382.8 90.5L380.8 92.4" fill="none" stroke="#3b76bd"/>
<path d="M392 90h5v1h-5zM393 91h3v1h-3zM394 92h1v1h-1z" fill="#777"/>
<rect x="303" y="109" width="3.3999999999999773" height="1" fill="#666"/>
<rect x="308" y="109" width="9" height="1" fill="#666"/>
<rect x="303" y="118" width="3.3999999999999773" height="1" fill="#666"/>
<rect x="308" y="118" width="9" height="1" fill="#666"/>
<rect x="308" y="112" width="9" height="1" fill="#666"/>
<rect x="308" y="115" width="6" height="1" fill="#666"/>
<path d="M301 114L304.8 110.6V112.9H308.2V115.1H304.8V117.4Z" fill="#3b76bd"/>
<rect x="325" y="109" width="3.3999999999999773" height="1" fill="#666"/>
<rect x="330" y="109" width="9" height="1" fill="#666"/>
<rect x="325" y="118" width="3.3999999999999773" height="1" fill="#666"/>
<rect x="330" y="118" width="9" height="1" fill="#666"/>
<rect x="330" y="112" width="9" height="1" fill="#666"/>
<rect x="330" y="115" width="6" height="1" fill="#666"/>
<path d="M330.2 114L326.4 110.6V112.9H323V115.1H326.4V117.4Z" fill="#3b76bd"/>
<rect x="346" y="103" width="1" height="22" fill="#e1e1e1"/>
<path d="M360.6 120.4L369.4 111.6" stroke="#555" stroke-width="1.2"/>
<path d="M370.4 110.6L366.9 111.5L369.5 114.1Z" fill="#555"/>
<text x="0" y="0" transform="translate(358.2 118.8) rotate(-45)" font-family="Liberation Sans, Arial, sans-serif" font-size="12" fill="#4a4a4a">ab</text>
<path d="M374 113h5v1h-5zM375 114h3v1h-3zM376 115h1v1h-1z" fill="#777"/>
<path d="M395 140V135H400" fill="none" stroke="#777" stroke-width="1" transform="translate(.5 .5)"/><path d="M398 138L401.2 141.2" stroke="#777" stroke-width="1.2"/><path d="M402 138.5V142H398.5Z" fill="#777"/>
<rect x="411.5" y="57.5" width="77" height="22" fill="#fff" stroke="#ababab"/>
<path d="M479 67h5v1h-5zM480 68h3v1h-3zM481 69h1v1h-1z" fill="#666"/>
<rect x="414.3" y="83.8" width="15" height="7.4" fill="#fff" stroke="#3b76bd" stroke-width="1.6"/>
<circle cx="421.8" cy="87.5" r="1.9" fill="#3b76bd"/>
<rect x="414" y="84" width="2" height="1.4" fill="#fff"/><rect x="428" y="84" width="2" height="1.4" fill="#fff"/><rect x="414" y="89.6" width="2" height="1.6" fill="#fff"/>
<ellipse cx="426.2" cy="90.3" rx="3.7" ry="1.5" fill="#f0c27a" stroke="#fff" stroke-width=".6"/>
<ellipse cx="426.2" cy="92.6" rx="3.7" ry="1.5" fill="#f0c27a" stroke="#fff" stroke-width=".6"/>
<ellipse cx="426.2" cy="94.9" rx="3.7" ry="1.5" fill="#f0c27a" stroke="#fff" stroke-width=".6"/>
<ellipse cx="421.4" cy="94.3" rx="3.7" ry="1.4" fill="#f0c27a" stroke="#fff" stroke-width=".6"/>
<ellipse cx="421.4" cy="96.4" rx="3.7" ry="1.4" fill="#f0c27a" stroke="#fff" stroke-width=".6"/>
<ellipse cx="421.4" cy="98.1" rx="3.7" ry="1.4" fill="#f0c27a" stroke="#fff" stroke-width=".6"/>
<path d="M436 90h5v1h-5zM437 91h3v1h-3zM438 92h1v1h-1z" fill="#777"/>
<path d="M414.6 110.8H420.6M417.2 108.3L414.6 110.8L417.2 113.3" fill="none" stroke="#3b76bd" stroke-width="1.3"/>
<path d="M436.4 117.4H442.4M439.8 114.9L442.4 117.4L439.8 119.9" fill="none" stroke="#3b76bd" stroke-width="1.3"/>
<path d="M482 140V135H487" fill="none" stroke="#777" stroke-width="1" transform="translate(.5 .5)"/><path d="M485 138L488.2 141.2" stroke="#777" stroke-width="1.2"/><path d="M489 138.5V142H485.5Z" fill="#777"/>
<rect x="501.5" y="60.5" width="13" height="12" fill="#fff" stroke="#8a8a8a"/>
<path d="M501.5 64.5H514.5M501.5 68.5H514.5M510.5 60.5V68.5" stroke="#8a8a8a"/>
<rect x="502" y="61" width="6" height="3" fill="#dc4a2c"/>
<rect x="502" y="65" width="8" height="3" fill="#4a7ebb"/>
<rect x="502" y="69" width="3.6" height="3" fill="#dc4a2c"/>
<rect x="507.5" y="67.5" width="9" height="8" fill="#fff" stroke="#666"/>
<path d="M509.6 70.5H514.6M509.6 72.5H514.6M513.4 69.2L510.8 73.8" stroke="#444" stroke-width=".9" fill="none"/>
<rect x="501.5" y="83.5" width="15" height="12" fill="#fff" stroke="#8a8a8a"/>
<rect x="505" y="87" width="8" height="8" fill="#c3dbea"/>
<path d="M501.5 87.5H516.5M501.5 91.5H516.5M505.5 83.5V95.5M509.5 83.5V95.5M513.5 83.5V95.5" stroke="#8a8a8a" stroke-opacity=".8"/>
<path d="M509 95.6L516.2 84.8L518 86V91.6L513.6 96.4Z" fill="#fff"/>
<path d="M512.8 92.6L516.6 86.4L517.5 87.2V90.4L514.8 94.2Z" fill="#6f6f6f"/>
<path d="M505 98.7Q507.6 97.8 508.4 95.2Q509.8 92.8 512.2 93.4Q514.6 94.8 513.4 97.2Q511.6 99.2 505 98.7Z" fill="#3a76be"/>
<ellipse cx="511.8" cy="95.4" rx="1" ry=".8" fill="#cfe2f5"/>
<rect x="501.5" y="106.5" width="15" height="12" fill="#fff" stroke="#8a8a8a"/>
<rect x="505" y="110" width="8" height="6" fill="#b5d0e0"/>
<path d="M501.5 109.5H516.5M501.5 115.5H516.5M504.5 106.5V118.5" stroke="#8a8a8a"/>
<path d="M509 118.6L516.2 107.8L518 109V114.6L513.6 119.4Z" fill="#fff"/>
<path d="M512.8 115.6L516.6 109.4L517.5 110.2V113.4L514.8 117.2Z" fill="#6f6f6f"/>
<path d="M505 121.7Q507.6 120.8 508.4 118.2Q509.8 115.8 512.2 116.4Q514.6 117.8 513.4 120.2Q511.6 122.2 505 121.7Z" fill="#3a76be"/>
<ellipse cx="511.8" cy="118.4" rx="1" ry=".8" fill="#cfe2f5"/>
<path d="M647 67h5v1h-5zM648 68h3v1h-3zM649 69h1v1h-1z" fill="#777"/>
<path d="M606 90h5v1h-5zM607 91h3v1h-3zM608 92h1v1h-1z" fill="#777"/>
<path d="M576 113h5v1h-5zM577 114h3v1h-3zM578 115h1v1h-1z" fill="#777"/>
<path d="M675.5 60.5H679.5V63.5H675.5ZM671.5 69.5H675.5V72.5H671.5ZM675.5 69.5H679.5V72.5H675.5ZM671.5 72.5H675.5V75.5H671.5ZM675.5 72.5H679.5V75.5H675.5Z" fill="#fff" stroke="#8a8a8a"/>
<path d="M671.5 60.5H675.5V63.5H671.5Z" fill="#fff" stroke="#8a8a8a"/>
<rect x="678.5" y="65.5" width="8" height="3" fill="#b8d4e6" stroke="#8a8a8a"/><path d="M682.5 65.5V68.5" stroke="#8a8a8a"/>
<path d="M670.6 66.6L674.2 63.2V65.4H677.6V67.8H674.2V70Z" fill="#3b76bd"/>
<path d="M729 67h5v1h-5zM730 68h3v1h-3zM731 69h1v1h-1z" fill="#777"/>
<path d="M671.5 83.5H675.5V86.5H671.5ZM675.5 83.5H679.5V86.5H675.5ZM671.5 92.5H675.5V95.5H671.5ZM675.5 92.5H679.5V95.5H675.5ZM671.5 95.5H675.5V98.5H671.5ZM675.5 95.5H679.5V98.5H675.5Z" fill="#fff" stroke="#8a8a8a"/>
<rect x="674.5" y="88.5" width="4" height="3" fill="#b8d4e6" stroke="#8a8a8a"/>
<path d="M679.6 86.2L686.4 93M686.4 86.2L679.6 93" stroke="#e8704a" stroke-width="1.5"/>
<path d="M733 90h5v1h-5zM734 91h3v1h-3zM735 92h1v1h-1z" fill="#777"/>
<path d="M671.5 107.5H685.5M671.5 105.5V109.5M685.5 105.5V109.5" stroke="#3b76bd"/>
<path d="M673.8 105.8L672 107.5L673.8 109.2M683.2 105.8L685 107.5L683.2 109.2" fill="none" stroke="#3b76bd" stroke-width=".9"/>
<rect x="671.5" y="110.5" width="14" height="10" fill="#fff" stroke="#8a8a8a"/>
<path d="M671.5 113.5H685.5M671.5 117.5H685.5M675.5 110.5V120.5M680.5 110.5V120.5" stroke="#8a8a8a"/>
<rect x="676" y="114" width="4" height="3" fill="#3b76bd"/>
<path d="M671.5 120.5Q675 122.5 678.5 120.8Q682 122.5 685.5 120.5" fill="none" stroke="#8a8a8a" stroke-width=".9"/>
<path d="M731 113h5v1h-5zM732 114h3v1h-3zM733 115h1v1h-1z" fill="#777"/>
<path d="M755.6 60H769.6V62.6H760.2L766 67.4L760 72.4H770V75H755.6V73.4L762.6 67.4L755.6 61.6Z" fill="#555"/>
<path d="M777 67h5v1h-5zM778 68h3v1h-3zM779 69h1v1h-1z" fill="#777"/>
<rect x="756.5" y="83.5" width="13" height="15" fill="#fff" stroke="#777"/>
<rect x="756" y="83" width="14" height="3.4" fill="#777"/>
<path d="M763.1 88V95M759.6 92L763.1 95.8L766.6 92" fill="none" stroke="#3b76bd" stroke-width="1.9"/>
<path d="M775 90h5v1h-5zM776 91h3v1h-3zM777 92h1v1h-1z" fill="#777"/>
<path d="M757 114.2L764.6 107.6Q765.4 107 766.2 107.8L769.6 111.4Q770.2 112.2 769.4 113L762.6 119.2H759.6L757 116.4Q756.2 115.2 757 114.2Z" fill="#e8879a"/>
<path d="M757.4 114L762.2 118.6" stroke="#fff" stroke-width="1"/>
<rect x="760.6" y="119" width="9.4" height="1" fill="#777"/>
<path d="M775 113h5v1h-5zM776 114h3v1h-3zM777 115h1v1h-1z" fill="#777"/>
<path d="M799 65.2H806.4V66.6L803.8 69.2V72.2H801.6V69.2L799 66.6Z" fill="#6e6e6e"/>
<path d="M810 67h5v1h-5zM811 68h3v1h-3zM812 69h1v1h-1z" fill="#777"/>
<path d="M792 86.4V84.6Q792 84 792.6 84H795Q795.6 84 795.6 84.6V86.4L796 88.4H798.8L799.2 86.4V84.6Q799.2 84 799.8 84H802.2Q802.8 84 802.8 84.6V86.4L805 93V96.4Q805 97 804.4 97H800Q799.4 97 799.4 96.4V92H795.4V96.4Q795.4 97 794.8 97H790.4Q789.8 97 789.8 96.4V93Z" fill="#595959"/>
<path d="M792.2 86.6H795.4M799.4 86.6H802.6" stroke="#9a9a9a" stroke-width=".7"/>
<path d="M791 93.4V96M803.8 93.4V96" stroke="#cfcfcf" stroke-width=".8"/>
<path d="M810 90h5v1h-5zM811 91h3v1h-3zM812 92h1v1h-1z" fill="#777"/>
<path d="M858.8 140.4L862.5 136.4L866.2 140.4" fill="none" stroke="#666" stroke-width="1.7"/>
</svg>
<span class="t" style="left:12.0px;top:98px;font-size:11.5px;line-height:11.5px;color:#444;letter-spacing:-0.23px;">Paste</span>
<span class="t" style="left:10.2px;top:133px;font-size:10.8px;line-height:10.8px;color:#666;letter-spacing:0.56px;">Clipboard</span>
<span class="t" style="left:93.9px;top:71px;font-size:12px;line-height:12px;color:#000;letter-spacing:0.04px;">Arial</span>
<span class="t" style="left:204.8px;top:71px;font-size:12px;line-height:12px;color:#000;">8</span>
<span class="t" style="left:250.8px;top:70px;font-size:14px;line-height:14px;color:#666;transform:scaleX(1.039);transform-origin:0 0;font-weight:bold;">A</span>
<span class="t" style="left:273.9px;top:73px;font-size:11.2px;line-height:11.2px;color:#666;transform:scaleX(1.037);transform-origin:0 0;font-weight:bold;">A</span>
<span class="t" style="left:97.0px;top:101px;font-size:12.5px;line-height:12.5px;color:#444;font-weight:bold;">B</span>
<span class="t" style="left:119.9px;top:100px;font-size:13px;line-height:13px;color:#444;font-style:italic;font-weight:bold;font-family:'Liberation Serif',serif;">I</span>
<span class="t" style="left:140.9px;top:101px;font-size:12.5px;line-height:12.5px;color:#444;font-weight:bold;">U</span>
<div style="left:141px;top:112px;width:9px;height:1px;background:#444;"></div>
<span class="t" style="left:260.7px;top:99px;font-size:14px;line-height:14px;color:#666;transform:scaleX(1.088);transform-origin:0 0;font-weight:bold;">A</span>
<span class="t" style="left:170.3px;top:133px;font-size:10.8px;line-height:10.8px;color:#666;letter-spacing:0.85px;">Font</span>
<span class="t" style="left:314.9px;top:133px;font-size:10.8px;line-height:10.8px;color:#666;letter-spacing:0.68px;">Alignment</span>
<span class="t" style="left:414.3px;top:63px;font-size:12px;line-height:12px;color:#000;letter-spacing:-0.49px;">General</span>
<span class="t" style="left:449.9px;top:84px;font-size:15.4px;line-height:15.4px;color:#555;">%</span>
<span class="t" style="left:475px;top:72px;font-size:22px;line-height:22px;color:#555;font-weight:bold;font-family:'Liberation Serif',serif;">,</span>
<span class="t" style="left:421.7px;top:107px;font-size:7.6px;line-height:7.6px;color:#333;letter-spacing:0.56px;">.0</span>
<span class="t" style="left:416.9px;top:114px;font-size:7.6px;line-height:7.6px;color:#333;letter-spacing:0.57px;">.00</span>
<span class="t" style="left:438.5px;top:107px;font-size:7.6px;line-height:7.6px;color:#333;letter-spacing:0.62px;">.00</span>
<span class="t" style="left:443.7px;top:114px;font-size:7.6px;line-height:7.6px;color:#333;letter-spacing:0.26px;">.0</span>
<span class="t" style="left:421.2px;top:133px;font-size:10.8px;line-height:10.8px;color:#666;letter-spacing:0.61px;">Number</span>
<span class="t" style="left:520.2px;top:63px;font-size:12px;line-height:12px;color:#444;letter-spacing:0.17px;">Conditional Formatting</span>
<span class="t" style="left:520.2px;top:86px;font-size:12px;line-height:12px;color:#444;letter-spacing:-0.18px;">Format as Table</span>
<span class="t" style="left:520.2px;top:109px;font-size:12px;line-height:12px;color:#444;letter-spacing:-0.35px;">Cell Styles</span>
<span class="t" style="left:564.3px;top:133px;font-size:10.8px;line-height:10.8px;color:#666;letter-spacing:-0.19px;">Styles</span>
<span class="t" style="left:689.8px;top:63px;font-size:12px;line-height:12px;color:#444;letter-spacing:-0.07px;">Insert</span>
<span class="t" style="left:689.8px;top:86px;font-size:12px;line-height:12px;color:#444;letter-spacing:-0.19px;">Delete</span>
<span class="t" style="left:689.8px;top:109px;font-size:12px;line-height:12px;color:#444;letter-spacing:0.11px;">Format</span>
<span class="t" style="left:693.1px;top:133px;font-size:10.8px;line-height:10.8px;color:#666;letter-spacing:0.02px;">Cells</span>
<span class="t" style="left:790.6px;top:59px;font-size:10.4px;line-height:10.4px;color:#2f6fc0;transform:scaleX(0.936);transform-origin:0 0;font-weight:bold;">A</span>
<span class="t" style="left:790.8px;top:68px;font-size:10.4px;line-height:10.4px;color:#8b3fae;transform:scaleX(1.074);transform-origin:0 0;font-weight:bold;">Z</span>
<span class="t" style="left:767.2px;top:133px;font-size:10.8px;line-height:10.8px;color:#666;letter-spacing:0.62px;">Editing</span>
<svg style="left:0;top:0" width="878" height="56" viewBox="0 0 878 56">
<rect x="20.5" y="8.5" width="6.3" height="12" fill="#fff" stroke="#1e7145" stroke-width="1"/>
<rect x="22.6" y="10.2" width="3.2" height="1.1" fill="#1e7145"/>
<rect x="22.6" y="12.3" width="3.2" height="1.1" fill="#1e7145"/>
<rect x="22.6" y="14.3" width="3.2" height="1.1" fill="#1e7145"/>
<rect x="22.6" y="16.3" width="3.2" height="1.1" fill="#1e7145"/>
<rect x="22.6" y="18.2" width="3.2" height="1.1" fill="#1e7145"/>
<path d="M10.8 8.4L21 6.8V22.8L10.8 21.7Z" fill="#1e7145"/>
<path d="M13.4 11.3L18.6 19M18.6 11.3L13.4 19" stroke="#fff" stroke-width="1.9" fill="none"/>
<rect x="41.2" y="8" width="13.7" height="13.8" fill="#8045a0"/>
<rect x="43.2" y="9.3" width="9.8" height="5.3" fill="#fff"/>
<rect x="44.2" y="17.2" width="8" height="3.7" fill="#fff"/>
<rect x="45.8" y="19" width="2.1" height="2" fill="#8045a0"/>
<path d="M69.9 12L75.7 7.9V15.9Z" fill="#3b78be"/>
<path d="M74.5 12H79.4Q83 12.4 83 15.6Q83 19 78.6 19.6" fill="none" stroke="#3b78be" stroke-width="2.2"/>
<path d="M90 13h5v1h-5zM91 14h3v1h-3zM92 15h1v1h-1z" fill="#555"/>
<path d="M124.2 12L118.4 7.9V15.9Z" fill="#b9b9b9"/>
<path d="M119.6 12H114.8Q111.2 12.4 111.2 15.6Q111.2 19 115.6 19.6" fill="none" stroke="#b9b9b9" stroke-width="2.2"/>
<path d="M130 13h5v1h-5zM131 14h3v1h-3zM132 15h1v1h-1z" fill="#c4c4c4"/>
<path d="M221 13h5v1h-5zM222 14h3v1h-3zM223 15h1v1h-1z" fill="#444"/>
<rect x="241" y="12.6" width="5" height="1" fill="#666"/>
<path d="M241 15.4h5v1h-5zM242 16.4h3v1h-3zM243 17.4h1v1h-1z" fill="#666"/>
<rect x="768.5" y="10.5" width="12" height="9" fill="#fff" stroke="#777"/>
<rect x="768" y="10" width="13" height="2" fill="#777"/>
<path d="M774.5 18.4V14M772 16.2L774.5 13.6L777 16.2" fill="none" stroke="#777" stroke-width="1.1"/>
<rect x="800" y="16" width="8" height="2" fill="#777"/>
<rect x="828.5" y="10.5" width="9" height="9" fill="#fff" stroke="#777"/>
<rect x="828" y="10" width="10" height="3" fill="#777"/>
<path d="M858 11L866.4 19.4M866.4 11L858 19.4" stroke="#777" stroke-width="2.1"/>
<path d="M831 39h5v1h-5zM832 40h3v1h-3zM833 41h1v1h-1z" fill="#666"/>
</svg>
<span class="t" style="left:741.2px;top:8px;font-size:14px;line-height:14px;color:#777;font-weight:bold;">?</span>
<div style="left:0px;top:0px;width:878px;height:1px;background:#217346;"></div>
<div style="left:0px;top:0px;width:1px;height:744px;background:#217346;"></div>
<div style="left:877px;top:0px;width:1px;height:744px;background:#217346;"></div>
</div>
</body>
</html>
